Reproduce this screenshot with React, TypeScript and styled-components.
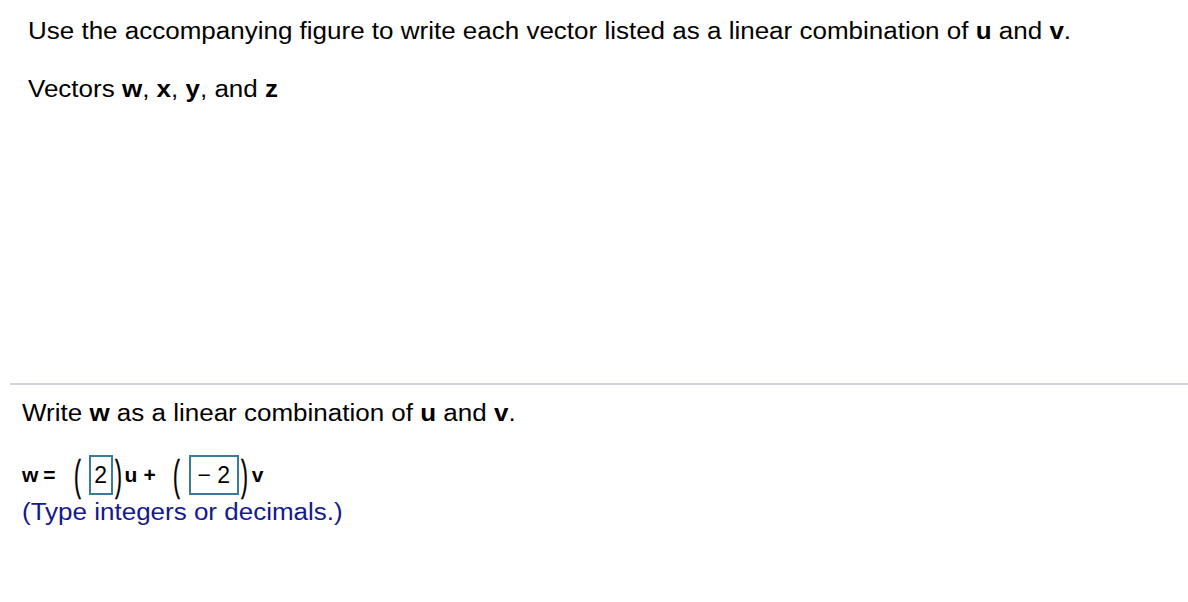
import styled, { createGlobalStyle, css } from 'styled-components';

const GlobalStyle = createGlobalStyle`
  html, body {
    margin: 0;
    padding: 0;
    background: #ffffff;
  }
  body {
    font-family: "Liberation Sans", Arial, sans-serif;
    color: #000000;
  }
`;

// the reference text is drawn a bit wide, so stretch each line horizontally
const wideText = css`
  font-size: 23px;
  line-height: 26px;
  white-space: nowrap;
  transform: scaleX(1.13);
  transform-origin: left center;
`;

function App() {
  return (
    <Page>
      <GlobalStyle />
      <Prompt>
        <PromptLine>
          Use the accompanying figure to write each vector listed as a linear
          combination of <b>u</b> and <b>v</b>.
        </PromptLine>
        <PromptLine>
          Vectors <b>w</b>, <b>x</b>, <b>y</b>, and <b>z</b>
        </PromptLine>
      </Prompt>
      <Divider />
      <Part>
        <PartLine>
          Write <b>w</b> as a linear combination of <b>u</b> and <b>v</b>.
        </PartLine>
        <Equation>
          <Symbol>w</Symbol>
          <Symbol gap={5}>=</Symbol>
          <Paren gap={17}>(</Paren>
          <AnswerBox gap={7} width={24}>2</AnswerBox>
          <Paren gap={1}>)</Paren>
          <Symbol gap={2}>u</Symbol>
          <Symbol gap={6}>+</Symbol>
          <Paren gap={16}>(</Paren>
          <AnswerBox gap={8} width={50}>− 2</AnswerBox>
          <Paren gap={1}>)</Paren>
          <Symbol gap={3}>v</Symbol>
        </Equation>
        <Hint>(Type integers or decimals.)</Hint>
      </Part>
    </Page>
  );
}

const Page = styled.div`
  width: 1188px;
  min-height: 602px;
  overflow: hidden;
`;

const Prompt = styled.div`
  display: flex;
  flex-direction: column;
  gap: 32px;
  padding: 18px 0 0 28px;
  height: 383px;
  box-sizing: border-box;
`;

const PromptLine = styled.div`
  ${wideText};
`;

const Divider = styled.div`
  height: 2px;
  margin-left: 10px;
  background: #d2d3e2;
`;

const Part = styled.div`
  padding: 15px 0 0 22px;
`;

const PartLine = styled.div`
  ${wideText};
`;

const Equation = styled.div`
  display: flex;
  align-items: center;
  margin-top: 29px;
  height: 40px;
`;

const Symbol = styled.span<{ gap?: number }>`
  flex: none;
  font-size: 21px;
  font-weight: bold;
  margin-left: ${(p) => p.gap ?? 0}px;
`;

const Paren = styled.span<{ gap?: number }>`
  flex: none;
  display: inline-block;
  width: 9px;
  margin-left: ${(p) => p.gap ?? 0}px;
  font-size: 26px;
  line-height: 40px;
  text-align: center;
  -webkit-text-stroke: 0.3px #000;
  transform: scale(0.8, 1.65);
`;

const AnswerBox = styled.span<{ width: number; gap?: number }>`
  flex: none;
  display: inline-flex;
  align-items: center;
  justify-content: center;
  box-sizing: border-box;
  width: ${(p) => p.width}px;
  height: 40px;
  margin-left: ${(p) => p.gap ?? 0}px;
  border: 2px solid #3a7b9a;
  font-size: 23px;
`;

const Hint = styled.div`
  ${wideText};
  margin-top: 4px;
  color: #14198c;
`;

export default App;
